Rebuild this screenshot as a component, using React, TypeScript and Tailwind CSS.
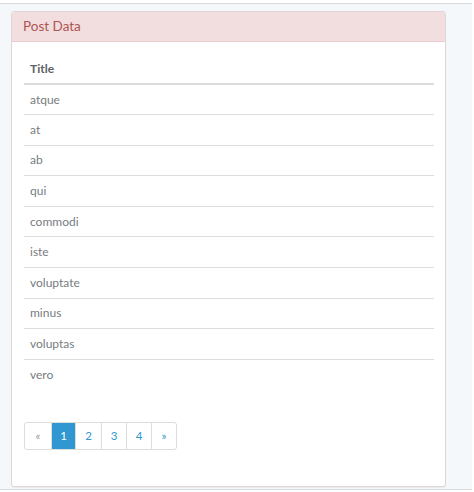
const posts = [
  "atque",
  "at",
  "ab",
  "qui",
  "commodi",
  "iste",
  "voluptate",
  "minus",
  "voluptas",
  "vero",
];

const pages = ["«", "1", "2", "3", "4", "»"];
const pageWidths = ["w-[26px]", "w-[24px]", "w-[26px]", "w-[25px]", "w-[25px]", "w-[25px]"];

export default function App() {
  return (
    <div className="h-[492px] w-[474px] bg-white font-['Lato','Open_Sans',sans-serif] text-[#636b6f]">
      <div className="mt-[3px] h-[487px] w-[472px] border-t border-b border-[#d9dcde] bg-[#f5f8fa] pt-[7px] pl-[11px]">
        <div className="flex h-[476px] w-[435px] flex-col rounded-[3px] border border-[#e3d5d7] bg-white shadow-[0_1px_1px_rgba(0,0,0,0.05)]">
          <div className="flex h-[30px] items-center rounded-t-[3px] border-b border-[#ebccd1] bg-[#f2dede] pl-[11px] text-[13.5px] text-[#ad5553]">
            Post Data
          </div>

          <div className="px-[12px] pt-[12px]">
            <table className="w-[410px] border-collapse text-[12px]">
              <thead>
                <tr className="h-[30px] border-b-2 border-[#dddddd]">
                  <th className="px-[6px] text-left font-bold text-[#5d6367]">Title</th>
                </tr>
              </thead>
              <tbody>
                {posts.map((p, i) => (
                  <tr
                    key={p}
                    className={
                      i < posts.length - 1
                        ? "h-[30.6px] border-b border-[#dddddd]"
                        : "h-[30.6px]"
                    }
                  >
                    <td className="px-[6px] text-[#777c80]">{p}</td>
                  </tr>
                ))}
              </tbody>
            </table>

            <div className="mt-[32px] flex h-[28px] w-fit rounded-[3px] border border-[#dddddd] text-[11.5px]">
              {pages.map((pg, i) => (
                <div
                  key={pg}
                  className={
                    "flex items-center justify-center " +
                    pageWidths[i] +
                    (i > 0 ? " border-l border-[#dddddd]" : "") +
                    (pg === "1"
                      ? " bg-[#3097d1] text-white"
                      : pg === "«"
                      ? " text-[#9a9ea1]"
                      : " text-[#3097d1]")
                  }
                >
                  {pg}
                </div>
              ))}
            </div>
          </div>
        </div>
      </div>
    </div>
  );
}
